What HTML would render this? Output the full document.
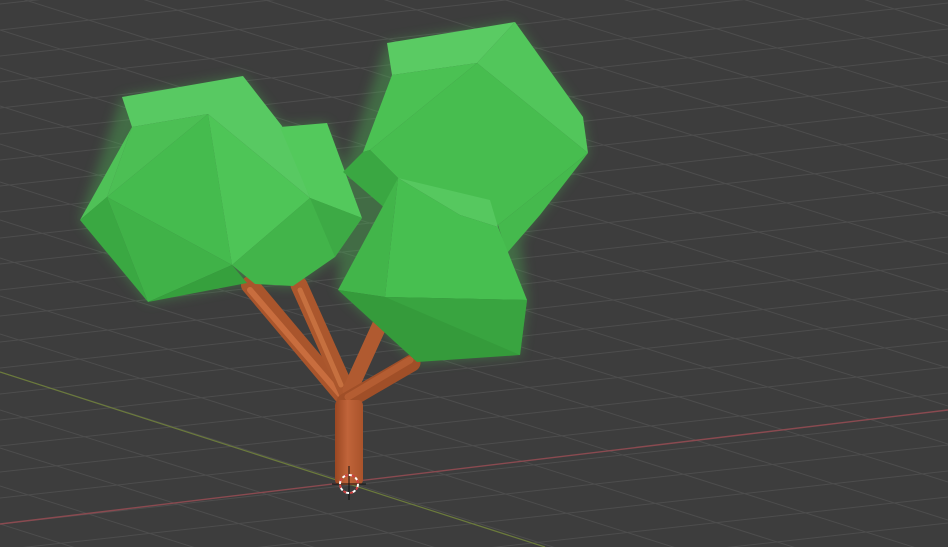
<!DOCTYPE html>
<html><head><meta charset="utf-8"><style>
html,body{margin:0;padding:0;background:#3d3d3d;width:948px;height:547px;overflow:hidden}
svg{position:absolute;left:0;top:0;display:block}
</style></head><body>
<svg id="s" width="948" height="547" viewBox="0 0 948 547" xmlns="http://www.w3.org/2000/svg">
<defs>
<filter id="glow" x="-20%" y="-20%" width="140%" height="140%"><feGaussianBlur stdDeviation="6"/></filter>
<linearGradient id="tr" x1="0" x2="1" y1="0" y2="0"><stop offset="0" stop-color="#9a4722"/><stop offset="0.45" stop-color="#c0643a"/><stop offset="1" stop-color="#a9532b"/></linearGradient>
</defs>
<rect width="948" height="547" fill="#3d3d3d"/>
<g id="grid" stroke="#4d4d4d" stroke-width="1"></g>
<line x1="0" y1="372" x2="545" y2="547" stroke="#6b7a3c" stroke-width="1.2"/>
<line x1="0" y1="524" x2="948" y2="410" stroke="#8a4a50" stroke-width="1.4"/>
<g filter="url(#glow)" opacity="0.35" fill="#4ec456">
<polygon points="122,97 243,76 282,126 327,123 362,218 335,258 293,287 247,283 148,302 80,220"/>
<polygon points="387,43 515,22 583,117 588,153 520,240 527,300 520,355 417,362 338,290 343,172"/>
</g>
<g stroke-linecap="round" fill="none">
<line x1="345" y1="398" x2="250" y2="285" stroke="#a9552c" stroke-width="18"/>
<line x1="250" y1="290" x2="343" y2="398" stroke="#c86d3e" stroke-width="6"/>
<line x1="347" y1="392" x2="299" y2="285" stroke="#ab572d" stroke-width="17"/>
<line x1="300" y1="290" x2="341" y2="385" stroke="#c6703f" stroke-width="5"/>
<line x1="350" y1="390" x2="381" y2="322" stroke="#b05a30" stroke-width="15"/>
<line x1="345" y1="402" x2="412" y2="363" stroke="#a04f28" stroke-width="17"/>
<line x1="348" y1="397" x2="410" y2="360" stroke="#b45d32" stroke-width="7"/>
</g>
<rect x="335" y="400" width="28" height="85" rx="5" fill="url(#tr)"/>
<polygon points="122,97 243,76 282,126 310,198 208,114 132,127" fill="#58c962"/>
<polygon points="132,127 208,114 107,197" fill="#4cbf54"/>
<polygon points="132,127 107,197 80,220" fill="#4fc157"/>
<polygon points="80,220 107,197 148,302" fill="#3aa842"/>
<polygon points="208,114 107,197 232,265" fill="#45bb4e"/>
<polygon points="208,114 232,265 310,198" fill="#4ec557"/>
<polygon points="107,197 232,265 148,302" fill="#40b248"/>
<polygon points="148,302 232,265 247,283" fill="#36a03d"/>
<polygon points="280,127 327,123 362,218 310,198" fill="#53c95c"/>
<polygon points="310,198 362,218 335,257 293,286 255,284 232,265" fill="#42b44a"/>
<polygon points="310,198 362,218 335,257" fill="#3daa45"/>
<polygon points="387,43 515,22 477,63 392,75" fill="#5acb63"/>
<polygon points="515,22 583,117 588,153 477,63" fill="#52c65b"/>
<polygon points="392,75 477,63 370,150 363,152" fill="#4bc153"/>
<polygon points="477,63 588,153 498,225 398,178 370,150" fill="#47bd4f"/>
<polygon points="588,153 540,215 507,253 498,225" fill="#45b94d"/>
<polygon points="363,152 370,150 398,178 387,210 343,172" fill="#3aa742"/>
<polygon points="398,178 490,200 498,227 460,215" fill="#56c85f"/>
<polygon points="398,178 460,215 498,227 527,300 385,297" fill="#47bf50"/>
<polygon points="398,178 385,297 338,290" fill="#42b54a"/>
<polygon points="338,290 385,297 527,300 520,355 417,362" fill="#359b3b"/>
<polygon points="385,297 527,300 520,355" fill="#39a440"/>
<g>
<line x1="349" y1="466" x2="349" y2="500" stroke="#111" stroke-width="1"/>
<line x1="332" y1="484" x2="366" y2="484" stroke="#111" stroke-width="1"/>
<circle cx="349" cy="484" r="9" fill="none" stroke="#fff" stroke-width="2" stroke-dasharray="4 3"/>
<circle cx="349" cy="484" r="9" fill="none" stroke="#d04040" stroke-width="2" stroke-dasharray="3 4" stroke-dashoffset="4"/>
</g>
</svg>
<script>
var g=document.getElementById('grid'),ns='http://www.w3.org/2000/svg';
function L(x1,y1,x2,y2){var l=document.createElementNS(ns,'line');l.setAttribute('x1',x1);l.setAttribute('y1',y1);l.setAttribute('x2',x2);l.setAttribute('y2',y2);g.appendChild(l);}
for(var k=-30;k<10;k++){var c=524+k*26;L(0,c,948,c-105);}
for(var k=-25;k<6;k++){var c=372+k*38;L(0,c,948,c+300);}
</script>
</body></html>
